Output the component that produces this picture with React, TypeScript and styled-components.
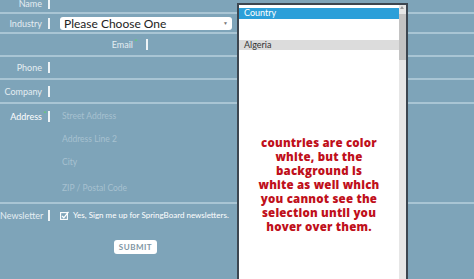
import React from "react";
import styled, { createGlobalStyle } from "styled-components";

const Global = createGlobalStyle`
  html, body { margin: 0; padding: 0; }
  body {
    background: #7ea4b9;
    font-family: Lato, "Open Sans", sans-serif;
    overflow: hidden;
  }
`;

const Page = styled.div`
  position: relative;
  width: 474px;
  height: 279px;
  overflow: hidden;
  background: #7ea4b9;
`;

const Form = styled.div`
  display: flex;
  flex-direction: column;
  margin-top: -5px;
`;

const Row = styled.div<{ $h: number; $line?: boolean }>`
  display: flex;
  align-items: ${(p) => (p.$h > 40 ? "flex-start" : "center")};
  height: ${(p) => p.$h}px;
  box-sizing: border-box;
  border-bottom: ${(p) => (p.$line === false ? "none" : "2px solid #a9c5d4")};
`;

const Label = styled.div<{ $w?: number; $strong?: boolean }>`
  width: ${(p) => p.$w ?? 42}px;
  flex: none;
  text-align: right;
  font-size: 9px;
  color: ${(p) => (p.$strong ? "#ffffff" : "#e4edf2")};
  position: relative;
`;

const Req = styled.span`
  color: #5fcf6a;
  font-size: 8px;
  position: absolute;
  right: -5px;
  top: -2px;
`;

const Pipe = styled.div<{ $shift?: number }>`
  width: 2px;
  height: 11px;
  background: #eef4f7;
  margin: 0 10px 0 ${(p) => p.$shift ?? 6}px;
  flex: none;
`;

const Select = styled.div`
  width: 172px;
  height: 13px;
  background: #ffffff;
  border-radius: 3px;
  display: flex;
  align-items: center;
  justify-content: space-between;
  padding: 0 4px;
  box-sizing: border-box;
  font-size: 12px;
  color: #222;
`;

const Caret = styled.span`
  font-size: 5px;
  color: #777;
`;

const AddressStack = styled.div`
  display: flex;
  flex-direction: column;
  gap: 10px;
  margin-top: -1px;
  padding-left: 2px;
`;

const Placeholder = styled.div<{ $gap?: number }>`
  font-size: 8.5px;
  color: #a7c1d0;
  height: 13px;
  line-height: 13px;
  margin-top: ${(p) => p.$gap ?? 0}px;
`;

const AddressRowInner = styled.div`
  display: flex;
  align-items: flex-start;
  padding-top: 7px;
`;

const Check = styled.span`
  display: inline-flex;
  margin-right: 4px;
`;

const Newsletter = styled.div`
  display: flex;
  align-items: center;
  font-size: 8px;
  color: #ffffff;
`;

const SubmitWrap = styled.div`
  display: flex;
  padding-left: 114px;
  margin-top: 14px;
`;

const Submit = styled.button`
  width: 43px;
  height: 14px;
  border: none;
  border-radius: 3px;
  background: #ffffff;
  color: #8095a3;
  font-family: Lato, sans-serif;
  font-weight: 700;
  font-size: 8px;
  letter-spacing: 0.5px;
  padding: 0;
`;

const ListPanel = styled.div`
  position: absolute;
  left: 237px;
  top: 3px;
  width: 171px;
  height: 290px;
  background: #ffffff;
  border: 2px solid #3c4650;
  box-sizing: border-box;
  display: flex;
`;

const Options = styled.div`
  flex: 1;
  padding-top: 3px;
  position: relative;
`;

const Option = styled.div<{ $kind?: "active" | "hover" }>`
  height: 10.5px;
  line-height: 10.5px;
  font-size: 9px;
  padding-left: 5px;
  color: ${(p) => (p.$kind === "hover" ? "#333" : "#ffffff")};
  background: ${(p) =>
    p.$kind === "active" ? "#2b9fd9" : p.$kind === "hover" ? "#dcdcdc" : "transparent"};
`;

const Scrollbar = styled.div`
  width: 7px;
  background: #e6e6e6;
  position: relative;
  flex: none;
`;

const Thumb = styled.div`
  position: absolute;
  top: 9px;
  left: 0;
  width: 7px;
  height: 46px;
  background: #c3c3c3;
`;

const Arrow = styled.div`
  position: absolute;
  top: 1px;
  left: 1px;
  width: 0;
  height: 0;
  border-left: 2.5px solid transparent;
  border-right: 2.5px solid transparent;
  border-bottom: 3px solid #999;
`;

const Note = styled.div`
  position: absolute;
  left: 0;
  right: 0;
  top: 131px;
  text-align: center;
  font-family: "Open Sans", sans-serif;
  font-weight: 800;
  font-size: 11.5px;
  letter-spacing: 0.2px;
  line-height: 14px;
  color: #c0101b;
  white-space: nowrap;
`;

const countries = [
  "Afghanistan",
  "Albania",
  "Algeria",
  "American Samoa",
  "Andorra",
  "Angola",
  "Anguilla",
  "Antarctica",
  "Antigua and Barbuda",
  "Argentina",
];

const noteLines = [
  "countries are color",
  "white, but the",
  "background is",
  "white as well which",
  "you cannot see the",
  "selection until you",
  "hover over them.",
];

export default function App() {
  return (
    <Page>
      <Global />
      <Form>
        <Row $h={19}>
          <Label>
            Name<Req>*</Req>
          </Label>
          <Pipe />
        </Row>
        <Row $h={20}>
          <Label>Industry</Label>
          <Pipe />
          <Select>
            <span>Please Choose One</span>
            <Caret>▼</Caret>
          </Select>
        </Row>
        <Row $h={23}>
          <Label $w={133}>
            Email<Req>*</Req>
          </Label>
          <Pipe $shift={13} />
        </Row>
        <Row $h={23}>
          <Label>Phone</Label>
          <Pipe />
        </Row>
        <Row $h={24}>
          <Label>Company</Label>
          <Pipe />
        </Row>
        <Row $h={100}>
          <AddressRowInner>
            <Label $strong>
              Address<Req>*</Req>
            </Label>
            <Pipe />
            <AddressStack>
              <Placeholder>Street Address</Placeholder>
              <Placeholder>Address Line 2</Placeholder>
              <Placeholder>City</Placeholder>
              <Placeholder $gap={3}>ZIP / Postal Code</Placeholder>
            </AddressStack>
          </AddressRowInner>
        </Row>
        <Row $h={22} $line={false}>
          <Label>Newsletter</Label>
          <Pipe />
          <Newsletter>
            <Check>
              <svg width="9" height="9" viewBox="0 0 9 9">
                <rect x="0.6" y="1.6" width="6.8" height="6.8" fill="none" stroke="#fff" strokeWidth="1.1" />
                <path d="M2 5 L3.8 6.8 L8.5 0.8" fill="none" stroke="#fff" strokeWidth="1.3" />
              </svg>
            </Check>
            Yes, Sign me up for SpringBoard newsletters.
          </Newsletter>
        </Row>
        <SubmitWrap>
          <Submit>SUBMIT</Submit>
        </SubmitWrap>
      </Form>

      <ListPanel>
        <Options>
          <Option $kind="active">Country</Option>
          {countries.map((c) => (
            <Option key={c} $kind={c === "Algeria" ? "hover" : undefined}>
              {c}
            </Option>
          ))}
          <Note>
            {noteLines.map((l) => (
              <div key={l}>{l}</div>
            ))}
          </Note>
        </Options>
        <Scrollbar>
          <Arrow />
          <Thumb />
        </Scrollbar>
      </ListPanel>
    </Page>
  );
}
